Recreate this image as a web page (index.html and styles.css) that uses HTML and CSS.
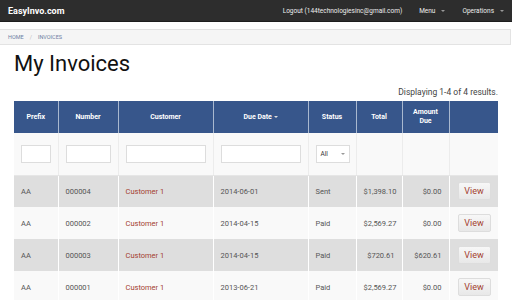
FILE: index.html
```html
<!DOCTYPE html>
<html lang="en">
<head>
  <meta charset="UTF-8" />
  <title>EasyInvo.com - My Invoices</title>
  <link rel="stylesheet" href="styles.css">
</head>
<body>
  <header class="navbar">
    <div class="brand">EasyInvo.com</div>
    <nav class="nav-links">
      <span>Logout (144technologiesinc@gmail.com)</span>
      <span>Menu <i class="caret"></i></span>
      <span>Operations <i class="caret"></i></span>
    </nav>
  </header>

  <div class="breadcrumb">
    <span>Home</span>
    <span class="sep">/</span>
    <span>Invoices</span>
  </div>

  <main class="content">
    <h1>My Invoices</h1>
    <div class="summary">Displaying 1-4 of 4 results.</div>

    <table class="grid">
      <colgroup>
        <col style="width:44px">
        <col style="width:60px">
        <col style="width:95px">
        <col style="width:95px">
        <col style="width:48px">
        <col style="width:46px">
        <col style="width:47px">
        <col style="width:49px">
      </colgroup>
      <thead>
        <tr>
          <th>Prefix</th>
          <th>Number</th>
          <th>Customer</th>
          <th>Due Date <i class="caret"></i></th>
          <th>Status</th>
          <th>Total</th>
          <th>Amount<br>Due</th>
          <th></th>
        </tr>
        <tr class="filters">
          <td><input type="text"></td>
          <td><input type="text"></td>
          <td><input type="text"></td>
          <td><input type="text"></td>
          <td><div class="select">All <i class="caret"></i></div></td>
          <td></td>
          <td></td>
          <td></td>
        </tr>
      </thead>
      <tbody>
        <tr class="odd">
          <td>AA</td><td>000004</td><td class="link">Customer 1</td><td>2014-06-01</td>
          <td>Sent</td><td class="num">$1,398.10</td><td class="num">$0.00</td>
          <td class="act"><button>View</button></td>
        </tr>
        <tr>
          <td>AA</td><td>000002</td><td class="link">Customer 1</td><td>2014-04-15</td>
          <td>Paid</td><td class="num">$2,569.27</td><td class="num">$0.00</td>
          <td class="act"><button>View</button></td>
        </tr>
        <tr class="odd">
          <td>AA</td><td>000003</td><td class="link">Customer 1</td><td>2014-04-15</td>
          <td>Paid</td><td class="num">$720.61</td><td class="num">$620.61</td>
          <td class="act"><button>View</button></td>
        </tr>
        <tr>
          <td>AA</td><td>000001</td><td class="link">Customer 1</td><td>2013-06-21</td>
          <td>Paid</td><td class="num">$2,569.27</td><td class="num">$0.00</td>
          <td class="act"><button>View</button></td>
        </tr>
      </tbody>
    </table>
  </main>
</body>
</html>
```

FILE: styles.css
```css
:root {
  --nav-bg: #2d2d2d;
  --head-bg: #37568b;
  --link: #a4412f;
  --text: #555;
  --font-main: Roboto, 'Liberation Sans', sans-serif;
}

* {
  margin: 0;
  padding: 0;
  box-sizing: border-box;
}

body {
  font-family: var(--font-main);
  background: #fff;
  color: #333;
  overflow: hidden;
}

.navbar {
  height: 22px;
  background: var(--nav-bg);
  border-bottom: 1px solid #1e1e1e;
  display: flex;
  justify-content: space-between;
  align-items: center;
  padding: 0 8px 0 8px;
}

.brand {
  color: #fff;
  font-weight: bold;
  font-size: 9px;
}

.nav-links {
  display: flex;
  gap: 17px;
  color: #eee;
  font-size: 6.5px;
}

.nav-links span {
  display: flex;
  align-items: center;
  gap: 6px;
}

.caret {
  display: inline-block;
  width: 0;
  height: 0;
  border-left: 2px solid transparent;
  border-right: 2px solid transparent;
  border-top: 2px solid #999;
}

.breadcrumb {
  margin: 7px 1px 0 0;
  height: 16px;
  background: #f5f5f5;
  border: 1px solid #e3e3e3;
  border-left: none;
  display: flex;
  align-items: center;
  gap: 6px;
  padding-left: 8px;
  font-size: 5.5px;
  text-transform: uppercase;
  color: #6e80a3;
}

.breadcrumb .sep {
  color: #bbb;
}

.content {
  padding: 0 14px;
}

h1 {
  font-weight: normal;
  font-size: 22px;
  color: #111;
  margin-top: 4px;
  line-height: 30px;
}

.summary {
  text-align: right;
  font-size: 8.5px;
  color: #444;
  margin-top: 8px;
  height: 14px;
}

.grid {
  width: 484px;
  border-collapse: collapse;
  table-layout: fixed;
  font-size: 7.5px;
  color: var(--text);
}

.grid th {
  background: var(--head-bg);
  color: #fff;
  font-size: 7px;
  font-weight: bold;
  height: 32px;
  border-left: 1px solid #a9b8cf;
  text-align: center;
  line-height: 9px;
}

.grid th:first-child {
  border-left: none;
}

.grid th .caret {
  border-top-color: #ddd;
  vertical-align: middle;
}

.grid td {
  height: 32px;
  padding: 0 7px;
  border-left: 1px solid #fff;
}

.grid td:first-child {
  border-left: none;
}

.filters td {
  height: 42px;
  background: #f9f9f9;
  border-left-color: #ececec;
  border-bottom: 1px solid #e6e6e6;
}

.filters input {
  width: 100%;
  height: 18px;
  border: 1px solid #ddd;
  background: #fff;
  display: block;
}

.select {
  width: 34px;
  height: 18px;
  border: 1px solid #ddd;
  background: #fff;
  font-size: 6.5px;
  color: #333;
  display: flex;
  align-items: center;
  justify-content: space-between;
  padding: 0 4px 0 4px;
}

tbody tr {
  background: #f9f9f9;
}

tbody tr.odd {
  background: #dedede;
}

.grid .link {
  color: var(--link);
}

.grid .num {
  text-align: right;
}

.grid .act {
  padding: 0 8px;
}

.act button {
  width: 33px;
  height: 18px;
  border: 1px solid #ddd;
  border-radius: 2px;
  background: linear-gradient(#f7f7f7, #e8e8e8);
  color: var(--link);
  font-family: var(--font-main);
  font-size: 9px;
  display: block;
}
```
